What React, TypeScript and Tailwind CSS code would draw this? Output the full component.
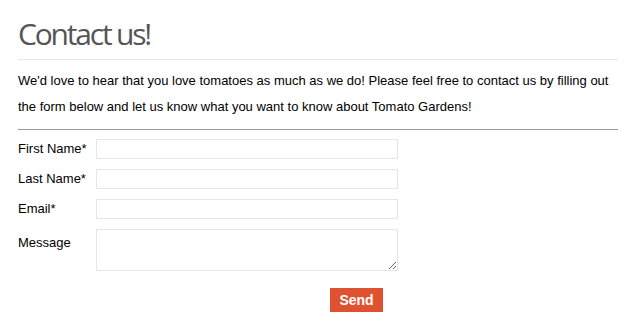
import React from "react";

const fields = [
  { label: "First Name*", name: "firstName" },
  { label: "Last Name*", name: "lastName" },
  { label: "Email*", name: "email" },
];

export default function App() {
  return (
    <div className="min-h-[332px] w-[637px] bg-white font-['Liberation_Sans',Arial,sans-serif] text-[13px] text-black">
      <div className="w-[600px] pl-[18px] pt-[17px] box-content">
        <h1 className="border-b border-[#e6e6e6] pb-[8px] font-['Open_Sans',sans-serif] text-[30px] font-normal leading-[34px] tracking-[-2.2px] text-[#555]">
          Contact us!
        </h1>
        <p className="mt-[8px] leading-[26px]">
          We'd love to hear that you love tomatoes as much as we do! Please feel free to contact us by filling out the form
          below and let us know what you want to know about Tomato Gardens!
        </p>
        <hr className="mt-[9px] border-0 border-t border-[#999]" />
        <form className="mt-[9px] flex flex-col gap-[10px]" onSubmit={(e) => e.preventDefault()}>
          {fields.map((f) => (
            <div key={f.name} className="flex items-center">
              <label className="w-[78px]">{f.label}</label>
              <input className="h-[20px] w-[302px] border border-[#e6e6e6] bg-white outline-none" />
            </div>
          ))}
          <div className="flex items-start">
            <label className="w-[78px] pt-[4px]">Message</label>
            <textarea className="h-[42px] w-[302px] border border-[#e6e6e6] bg-white outline-none" />
          </div>
          <div className="mt-[7px] pl-[312px]">
            <button
              type="submit"
              className="h-[24px] w-[53px] bg-[#df5231] text-[14px] font-bold text-white"
            >
              Send
            </button>
          </div>
        </form>
      </div>
    </div>
  );
}
